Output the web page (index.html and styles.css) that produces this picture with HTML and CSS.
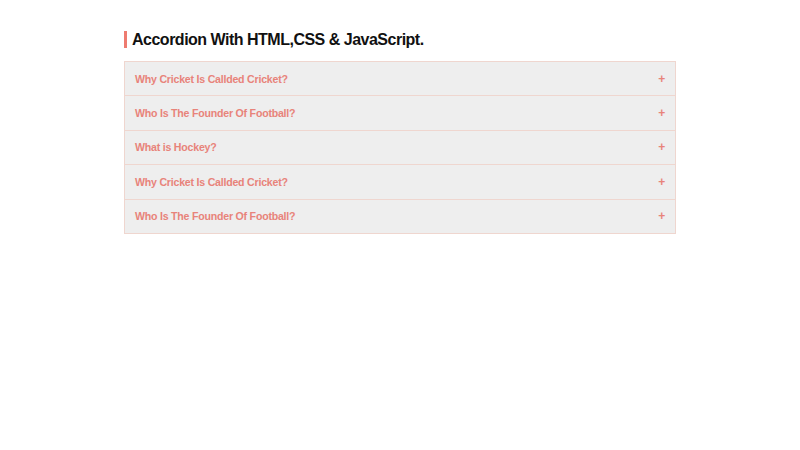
FILE: index.html
```html
<!DOCTYPE html>
<html>
<head>
<meta charset="utf-8">
<link rel="stylesheet" href="styles.css">
</head>
<body>
<div class="wrap">
  <h1 class="title">Accordion With HTML,CSS &amp; JavaScript.</h1>
  <div class="accordion">
    <div class="item"><span>Why Cricket Is Callded Cricket?</span><span class="plus">+</span></div>
    <div class="item"><span>Who Is The Founder Of Football?</span><span class="plus">+</span></div>
    <div class="item"><span>What is Hockey?</span><span class="plus">+</span></div>
    <div class="item"><span>Why Cricket Is Callded Cricket?</span><span class="plus">+</span></div>
    <div class="item"><span>Who Is The Founder Of Football?</span><span class="plus">+</span></div>
  </div>
</div>
</body>
</html>
```
FILE: styles.css
```css
html, body { margin: 0; padding: 0; background: #fff; }
body { font-family: "Liberation Sans", Arial, sans-serif; }
.wrap { width: 552px; margin: 0 auto; padding-top: 31px; }
.title {
  margin: 0 0 13px 0;
  font-size: 16px;
  line-height: 17px;
  font-weight: bold;
  letter-spacing: -0.5px;
  color: #111;
  border-left: 3px solid #ee7b70;
  padding-left: 5px;
}
.accordion { border: 1px solid #efd6cf; border-bottom: none; }
.item {
  display: flex;
  justify-content: space-between;
  align-items: center;
  height: 33.4px;
  padding: 0 10px 0 10px;
  background: #eeeeee;
  border-bottom: 1px solid #efd6cf;
  color: #e8837a;
  font-size: 10.6px;
  letter-spacing: -0.22px;
  font-weight: bold;
}
.plus { font-size: 12px; font-weight: bold; }
```
